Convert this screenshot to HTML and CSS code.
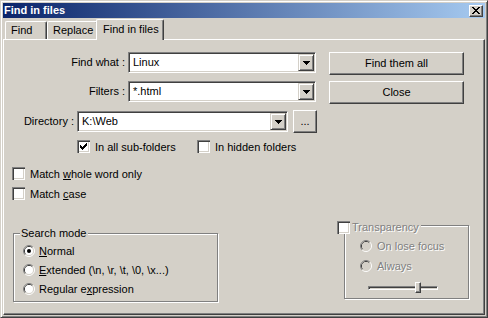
FILE: index.html
```html
<!DOCTYPE html>
<html>
<head>
<meta charset="utf-8">
<title>Find in files</title>
<link rel="stylesheet" href="styles.css">
</head>
<body>
<div class="window">
  <div class="titlebar">
    <span class="title">Find in files</span>
    <span class="close"><svg width="8" height="7" viewBox="0 0 8 7"><path fill="#000" d="M0 0h2v1H0zM6 0h2v1H6zM1 1h2v1H1zM5 1h2v1H5zM2 2h4v1H2zM3 3h2v1H3zM2 4h4v1H2zM1 5h2v1H1zM5 5h2v1H5zM0 6h2v1H0zM6 6h2v1H6z"/></svg></span>
  </div>
  <div class="tabs">
    <div class="tab t-find">Find</div>
    <div class="tab t-replace">Replace</div>
    <div class="tab active">Find in files</div>
  </div>
  <div class="panel">
    <div class="row">
      <span class="lbl">Find what :</span>
      <div class="combo c-main"><span class="val">Linux</span><span class="drop"><svg width="7" height="4" viewBox="0 0 7 4"><path fill="#000" d="M0 0h7v1H0zM1 1h5v1H1zM2 2h3v1H2zM3 3h1v1H3z"/></svg></span></div>
      <div class="btn b-main">Find them all</div>
    </div>
    <div class="row gap">
      <span class="lbl">Filters :</span>
      <div class="combo c-main"><span class="val">*.html</span><span class="drop"><svg width="7" height="4" viewBox="0 0 7 4"><path fill="#000" d="M0 0h7v1H0zM1 1h5v1H1zM2 2h3v1H2zM3 3h1v1H3z"/></svg></span></div>
      <div class="btn b-main">Close</div>
    </div>
    <div class="row gap">
      <span class="lbl lbl-dir">Directory :</span>
      <div class="combo c-dir"><span class="val">K:\Web</span><span class="drop"><svg width="7" height="4" viewBox="0 0 7 4"><path fill="#000" d="M0 0h7v1H0zM1 1h5v1H1zM2 2h3v1H2zM3 3h1v1H3z"/></svg></span></div>
      <div class="btn b-dots">...</div>
    </div>
    <div class="checks-sub">
      <label class="check first"><span class="cb"><svg width="13" height="13" viewBox="0 0 13 13"><path fill="#000" d="M9 3h1v1H9zM8 4h2v1H8zM3 5h1v1H3zM7 5h3v1H7zM3 6h2v1H3zM6 6h3v1H6zM3 7h5v1H3zM4 8h3v1H4zM5 9h1v1H5z"/></svg></span><span>In all sub-folders</span></label>
      <label class="check"><span class="cb"></span><span>In hidden folders</span></label>
    </div>
    <label class="check opt opt-1"><span class="cb"></span><span>Match <u>w</u>hole word only</span></label>
    <label class="check opt opt-2"><span class="cb"></span><span>Match <u>c</u>ase</span></label>
    <div class="bottom">
      <div class="group g-search">
        <span class="legend">Search mode</span>
        <div class="radio-row"><span class="rb"><svg width="12" height="12" viewBox="0 0 12 12"><path d="M2.11 9.89A5.5 5.5 0 0 1 9.89 2.11" fill="none" stroke="#808080"/><path d="M9.89 2.11A5.5 5.5 0 0 1 2.11 9.89" fill="none" stroke="#fff"/><path d="M2.82 9.18A4.5 4.5 0 0 1 9.18 2.82" fill="none" stroke="#404040"/><path d="M9.18 2.82A4.5 4.5 0 0 1 2.82 9.18" fill="none" stroke="#d4d0c8"/><circle cx="6" cy="6" r="4" fill="#fff"/><circle cx="6" cy="6" r="2" fill="#000"/></svg></span><span><u>N</u>ormal</span></div>
        <div class="radio-row"><span class="rb"><svg width="12" height="12" viewBox="0 0 12 12"><path d="M2.11 9.89A5.5 5.5 0 0 1 9.89 2.11" fill="none" stroke="#808080"/><path d="M9.89 2.11A5.5 5.5 0 0 1 2.11 9.89" fill="none" stroke="#fff"/><path d="M2.82 9.18A4.5 4.5 0 0 1 9.18 2.82" fill="none" stroke="#404040"/><path d="M9.18 2.82A4.5 4.5 0 0 1 2.82 9.18" fill="none" stroke="#d4d0c8"/><circle cx="6" cy="6" r="4" fill="#fff"/></svg></span><span><u>E</u>xtended (\n, \r, \t, \0, \x...)</span></div>
        <div class="radio-row"><span class="rb"><svg width="12" height="12" viewBox="0 0 12 12"><path d="M2.11 9.89A5.5 5.5 0 0 1 9.89 2.11" fill="none" stroke="#808080"/><path d="M9.89 2.11A5.5 5.5 0 0 1 2.11 9.89" fill="none" stroke="#fff"/><path d="M2.82 9.18A4.5 4.5 0 0 1 9.18 2.82" fill="none" stroke="#404040"/><path d="M9.18 2.82A4.5 4.5 0 0 1 2.82 9.18" fill="none" stroke="#d4d0c8"/><circle cx="6" cy="6" r="4" fill="#fff"/></svg></span><span>Regular e<u>x</u>pression</span></div>
      </div>
      <div class="group g-trans">
        <label class="legend legend-check"><span class="cb"></span><span class="disabled">Transparency</span></label>
        <div class="radio-row t-row"><span class="rb"><svg width="12" height="12" viewBox="0 0 12 12"><path d="M2.11 9.89A5.5 5.5 0 0 1 9.89 2.11" fill="none" stroke="#808080"/><path d="M9.89 2.11A5.5 5.5 0 0 1 2.11 9.89" fill="none" stroke="#fff"/><path d="M2.82 9.18A4.5 4.5 0 0 1 9.18 2.82" fill="none" stroke="#404040"/><path d="M9.18 2.82A4.5 4.5 0 0 1 2.82 9.18" fill="none" stroke="#d4d0c8"/><circle cx="6" cy="6" r="4" fill="#d4d0c8"/></svg></span><span class="disabled">On lose focus</span></div>
        <div class="radio-row t-row"><span class="rb"><svg width="12" height="12" viewBox="0 0 12 12"><path d="M2.11 9.89A5.5 5.5 0 0 1 9.89 2.11" fill="none" stroke="#808080"/><path d="M9.89 2.11A5.5 5.5 0 0 1 2.11 9.89" fill="none" stroke="#fff"/><path d="M2.82 9.18A4.5 4.5 0 0 1 9.18 2.82" fill="none" stroke="#404040"/><path d="M9.18 2.82A4.5 4.5 0 0 1 2.82 9.18" fill="none" stroke="#d4d0c8"/><circle cx="6" cy="6" r="4" fill="#d4d0c8"/></svg></span><span class="disabled">Always</span></div>
        <div class="slider"><span class="track"></span><span class="thumb"></span></div>
      </div>
    </div>
  </div>
</div>
</body>
</html>
```

FILE: styles.css
```css
* { box-sizing: border-box; }
html, body { margin: 0; padding: 0; background: #d4d0c8; }
body {
  font-family: "Liberation Sans", Arial, sans-serif;
  font-size: 11px;
  color: #000;
}
u { text-decoration: underline; text-underline-offset: 1px; }

.window {
  width: 488px;
  height: 318px;
  border: 1px solid;
  border-color: #d4d0c8 #404040 #404040 #d4d0c8;
  box-shadow: inset 1px 1px #fff, inset -1px -1px #808080;
  padding: 2px;
  background: #d4d0c8;
  display: flex;
  flex-direction: column;
}

.titlebar {
  height: 15px;
  background: linear-gradient(to right, #0a246a, #a6caf0);
  display: flex;
  align-items: center;
  justify-content: space-between;
  padding: 0 2px 0 1px;
}
.title {
  color: #fff;
  font-weight: bold;
  font-size: 11px;
  line-height: 15px;
}
.close {
  width: 14px;
  height: 12px;
  background: #d4d0c8;
  border: 1px solid;
  border-color: #fff #404040 #404040 #fff;
  box-shadow: inset -1px -1px #808080;
  display: flex;
  align-items: center;
  justify-content: center;
  padding-right: 1px;
}
.close svg { display: block; }

.tabs {
  height: 21px;
  display: flex;
  align-items: flex-start;
  padding-left: 2px;
}
.tab {
  height: 18px;
  margin-top: 3px;
  border-top: 1px solid #fff;
  border-left: 1px solid #fff;
  border-right: 1px solid #404040;
  box-shadow: inset -1px 0 #808080;
  border-radius: 2px 2px 0 0;
  padding-left: 5px;
  line-height: 16px;
  white-space: nowrap;
  background: #d4d0c8;
}
.t-find { width: 42px; }
.t-replace { width: 51px; }
.tab.active {
  position: relative;
  z-index: 1;
  width: 68px;
  height: 21px;
  margin-top: 1px;
  margin-left: -2px;
  padding-top: 1px;
  padding-left: 6px;
}

.panel {
  height: 276px;
  border: 1px solid;
  border-color: #fff #404040 #404040 #fff;
  box-shadow: inset -1px -1px #808080;
  padding-top: 12px;
}

.row {
  display: flex;
  align-items: flex-start;
  height: 23px;
}
.row.gap { margin-top: 6px; }
.lbl {
  width: 121px;
  text-align: right;
  line-height: 21px;
  white-space: nowrap;
}
.lbl-dir { width: 70px; line-height: 22px; }

.combo {
  height: 21px;
  margin-left: 3px;
  background: #fff;
  border: 1px solid;
  border-color: #808080 #fff #fff #808080;
  box-shadow: inset 1px 1px #404040, inset -1px -1px #d4d0c8;
  display: flex;
  align-items: center;
  justify-content: space-between;
  padding: 1px 1px 1px 4px;
}
.c-main { width: 188px; }
.c-dir { width: 211px; margin-top: 1px; }
.val { line-height: 17px; }
.drop {
  width: 16px;
  height: 17px;
  background: #d4d0c8;
  border: 1px solid;
  border-color: #d4d0c8 #404040 #404040 #d4d0c8;
  box-shadow: inset 1px 1px #fff, inset -1px -1px #808080;
  display: flex;
  align-items: center;
  justify-content: center;
  padding-top: 1px;
}
.drop svg { display: block; }

.btn {
  height: 23px;
  background: #d4d0c8;
  border: 1px solid;
  border-color: #fff #404040 #404040 #fff;
  box-shadow: inset -1px -1px #808080;
  text-align: center;
  line-height: 20px;
}
.b-main { width: 135px; margin-left: 13px; }
.b-dots { width: 24px; margin-left: 5px; line-height: 21px; }

.check {
  display: flex;
  align-items: center;
  height: 13px;
  white-space: nowrap;
}
.cb {
  flex: none;
  width: 13px;
  height: 13px;
  margin-right: 5px;
  background: #fff;
  box-shadow: inset 1px 1px #808080, inset 2px 2px #404040, inset -1px -1px #fff, inset -2px -2px #d4d0c8;
}
.cb svg { display: block; }

.checks-sub {
  display: flex;
  margin-top: 7px;
  padding-left: 73px;
}
.check.first { width: 120px; }

.opt { padding-left: 8px; }
.opt-1 { margin-top: 14px; }
.opt-2 { margin-top: 7px; }

.bottom {
  display: flex;
  align-items: flex-start;
}
.group {
  position: relative;
  border: 1px solid #808080;
  box-shadow: inset 1px 1px #fff, 1px 1px #fff;
}
.legend {
  position: absolute;
  background: #d4d0c8;
  white-space: nowrap;
  line-height: 13px;
}
.g-search {
  width: 205px;
  height: 69px;
  margin-top: 33px;
  margin-left: 9px;
  padding: 7px 0 0 9px;
}
.g-search .legend {
  top: -7px;
  left: 6px;
  padding: 0 2px 0 1px;
}
.radio-row {
  display: flex;
  align-items: center;
  height: 19px;
  white-space: nowrap;
}
.rb {
  flex: none;
  width: 12px;
  height: 12px;
  margin-right: 4px;
}
.rb svg { display: block; }

.g-trans {
  width: 125px;
  height: 74px;
  margin-top: 25px;
  margin-left: 126px;
  padding: 10px 0 0 15px;
}
.legend-check {
  top: -5px;
  left: -8px;
  display: flex;
  align-items: center;
  padding-right: 2px;
}
.legend-check .cb { margin-right: 2px; }
.t-row { height: 20px; }
.t-row .rb { margin-right: 5px; }
.disabled {
  color: #808080;
  text-shadow: 1px 1px 0 #fff;
}

.slider {
  position: relative;
  width: 70px;
  height: 11px;
  margin-top: 6px;
  margin-left: 8px;
}
.track {
  position: absolute;
  left: 0;
  right: 0;
  top: 4px;
  height: 4px;
  border: 1px solid;
  border-color: #808080 #fff #fff #808080;
  box-shadow: inset 1px 1px #404040;
}
.thumb {
  position: absolute;
  left: 47px;
  top: 0;
  width: 6px;
  height: 11px;
  background: #d4d0c8;
  border: 1px solid;
  border-color: #fff #404040 #404040 #fff;
  box-shadow: inset -1px -1px #808080;
}
```
